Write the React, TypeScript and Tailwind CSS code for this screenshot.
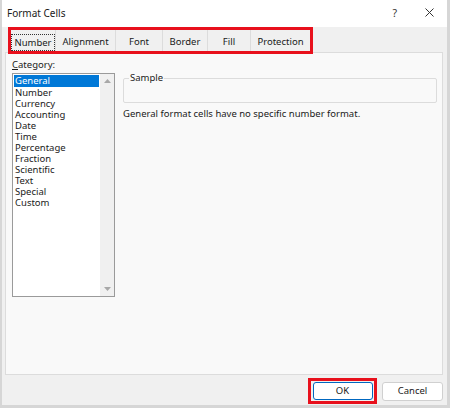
const font = { fontFamily: '"Noto Sans", "Open Sans", sans-serif' };

const categories = [
  "General",
  "Number",
  "Currency",
  "Accounting",
  "Date",
  "Time",
  "Percentage",
  "Fraction",
  "Scientific",
  "Text",
  "Special",
  "Custom",
];

const tabs = [
  { label: "Number", width: "w-[44px]" },
  { label: "Alignment", width: "w-[60px]" },
  { label: "Font", width: "w-[47px]" },
  { label: "Border", width: "w-[45px]" },
  { label: "Fill", width: "w-[43px]" },
  { label: "Protection", width: "w-[60px]" },
];

function TitleBar() {
  return (
    <div className="flex h-[27px] items-center justify-between bg-white pl-[5px] pr-[13px]">
      <span className="text-[10px] text-[#1a1a1a]">Format Cells</span>
      <div className="flex items-center gap-[28px]">
        <span className="text-[10.5px] text-[#333]">?</span>
        <svg width="9" height="9" viewBox="0 0 9 9" className="mt-[-2px]">
          <path d="M0.5 0.5 L8.5 8.5 M8.5 0.5 L0.5 8.5" stroke="#333" strokeWidth="1" />
        </svg>
      </div>
    </div>
  );
}

function TabStrip() {
  return (
    <div className="relative z-10 ml-[3px] -mb-[2px] flex h-[27px] w-[305px] border-[3px] border-[#e8101c]">
      {tabs.map((tab, i) => (
        <div
          key={tab.label}
          className={`flex h-full items-center justify-center pt-[3px] text-[9.5px] text-[#1a1a1a] ${tab.width} ${
            i > 0 ? "border-l border-[#dcdcdc]" : ""
          }`}
        >
          {i === 0 ? (
            <span className="border border-dotted border-[#333] px-[2px] leading-[15px]">{tab.label}</span>
          ) : (
            tab.label
          )}
        </div>
      ))}
    </div>
  );
}

function CategoryList() {
  return (
    <div className="flex h-[224px] w-[103px] border border-[#9a9a9a] bg-white">
      <div className="flex-1 pt-[1px]">
        {categories.map((c, i) => (
          <div
            key={c}
            className={`mx-[1px] pl-[1px] text-[9.5px] ${
              i === 0 ? "h-[12px] bg-[#0078d7] leading-[12px] text-white" : "h-[11px] leading-[11px] text-[#1a1a1a]"
            }`}
          >
            {c}
          </div>
        ))}
      </div>
      <div className="flex w-[14px] flex-col items-center justify-between bg-[#f0f0f0] py-[5px]">
        <svg width="7" height="4" viewBox="0 0 7 4">
          <path d="M0 4 L3.5 0 L7 4 Z" fill="#a8a8a8" />
        </svg>
        <svg width="7" height="4" viewBox="0 0 7 4">
          <path d="M0 0 L3.5 4 L7 0 Z" fill="#a8a8a8" />
        </svg>
      </div>
    </div>
  );
}

export default function App() {
  return (
    <div style={font} className="flex h-[408px] w-[450px] flex-col overflow-hidden border-b-[3px] border-l-[2px] border-r-[3px] border-[#d6d6d6] bg-[#f0f0f0]">
      <TitleBar />
      <div className="flex flex-1 flex-col px-[3px]">
        <TabStrip />
        <div className="flex h-[323px] w-[438px] gap-[8px] border border-[#dcdcdc] bg-[#f9f9f9] pl-[6px] pt-[6px]">
          <div className="flex flex-col">
            <div className="mb-[2px] text-[9.5px] leading-[12px] text-[#1a1a1a]">
              <span className="underline">C</span>ategory:
            </div>
            <CategoryList />
          </div>
          <div className="flex w-[314px] flex-col pt-[14px]">
            <fieldset className="h-[30px] rounded-[2px] border border-[#dcdcdc] px-[5px]">
              <legend className="px-[1px] text-[9.5px] leading-[10px] text-[#1a1a1a]">Sample</legend>
            </fieldset>
            <p className="mt-[5px] text-[9.5px] leading-[12px] text-[#1a1a1a]">
              General format cells have no specific number format.
            </p>
          </div>
        </div>
        <div className="flex flex-1 items-center justify-end gap-[5px] pr-[1px] pt-[2px]">
          <div className="flex h-[26px] w-[69px] items-center justify-center border-[3px] border-[#e8101c]">
            <button className="h-[18px] w-[60px] rounded-[3px] border border-[#0067c0] bg-white text-[9.5px] text-[#1a1a1a]">
              OK
            </button>
          </div>
          <button className="h-[19px] w-[61px] rounded-[3px] border border-[#d0d0d0] bg-white text-[9.5px] text-[#1a1a1a]">
            Cancel
          </button>
        </div>
      </div>
    </div>
  );
}
